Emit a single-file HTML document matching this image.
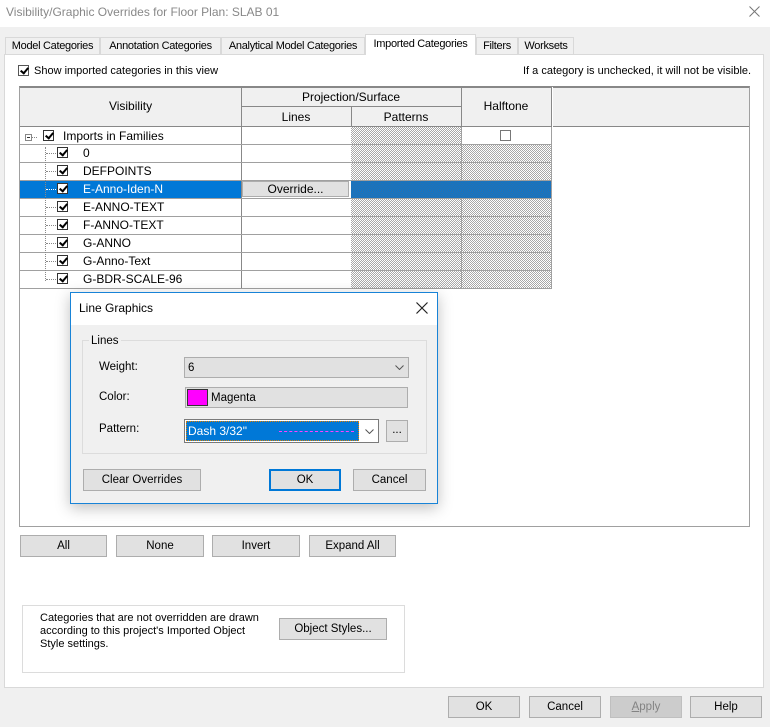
<!DOCTYPE html>
<html><head><meta charset="utf-8"><style>
*{box-sizing:border-box;margin:0;padding:0}
body{width:770px;height:727px;background:#f0f0f0;font-family:"Liberation Sans",sans-serif;font-size:11.5px;color:#000;position:relative;overflow:hidden}
.a{position:absolute}
.t{position:absolute;white-space:nowrap;line-height:14px}
.btn{position:absolute;background:#e1e1e1;border:1px solid #adadad;text-align:center;white-space:nowrap;font-size:11.5px}
.tab{position:absolute;top:37px;height:18px;border:1px solid #d9d9d9;border-bottom:none;background:#f0f0f0;text-align:center;line-height:16px;font-size:11px;white-space:nowrap;letter-spacing:-0.3px;overflow:hidden}
.cb{position:absolute;width:11px;height:11px;border:1px solid #333;background:#fff}
.cb:after{content:"";position:absolute;left:3px;top:0px;width:3px;height:6px;border:solid #000;border-width:0 2px 2px 0;transform:rotate(40deg)}
.hatch{background:repeating-conic-gradient(#a8a8a8 0 25%,#fff 0 50%) 0 0/2px 2px}
.hatchb{background:repeating-conic-gradient(#3a6d9e 0 25%,#0078d7 0 50%) 0 0/2px 2px}
.hl{position:absolute;height:1px;background:#a0a0a0}
.vl{position:absolute;width:1px;background:#a0a0a0}
.dot{position:absolute;border-left:1px dotted #888}
.doth{position:absolute;border-top:1px dotted #888;height:0}
</style></head><body>
<div class="a" style="left:0;top:0;width:770px;height:27px;background:#fff"></div>
<div class="t" style="left:6px;top:5px;color:#888;font-size:12px">Visibility/Graphic Overrides for Floor Plan: SLAB 01</div>
<svg class="a" style="left:749px;top:6px" width="11" height="11"><path d="M0.5 0.5L10.5 10.5M10.5 0.5L0.5 10.5" stroke="#777" stroke-width="1"/></svg>

<div class="tab" style="left:5px;width:95px">Model Categories</div>
<div class="tab" style="left:100px;width:121px">Annotation Categories</div>
<div class="tab" style="left:221px;width:144px">Analytical Model Categories</div>
<div class="tab" style="left:476px;width:42px">Filters</div>
<div class="tab" style="left:518px;width:56px">Worksets</div>
<div class="a" style="left:4px;top:54px;width:760px;height:634px;background:#fff;border:1px solid #d9d9d9"></div>
<div class="tab" style="left:365px;top:34px;width:111px;height:21px;background:#fff;line-height:18px;border-color:#d9d9d9">Imported Categories</div>

<div class="cb" style="left:18px;top:65px;border-color:#555"></div>
<div class="t" style="left:34px;top:64px;font-size:11px">Show imported categories in this view</div>
<div class="t" style="left:523px;top:64px;font-size:11px">If a category is unchecked, it will not be visible.</div>

<!-- grid -->
<div class="a" style="left:19px;top:86px;width:731px;height:441px;border:1px solid #a0a0a0;border-top:2px solid #888;background:#fff"></div>
<div class="a" style="left:20px;top:88px;width:729px;height:38px;background:#f0f0f0"></div>
<div class="hl" style="left:20px;top:126px;width:729px;background:#888"></div>
<div class="vl" style="left:241px;top:87px;height:202px;background:#888"></div>
<div class="vl" style="left:461px;top:87px;height:40px;background:#888"></div>
<div class="vl" style="left:551px;top:87px;height:40px;background:#888"></div>
<div class="vl" style="left:552px;top:87px;height:40px;background:#fff"></div>
<div class="hl" style="left:241px;top:106px;width:220px;background:#888"></div>
<div class="vl" style="left:351px;top:106px;height:20px;background:#888"></div>
<div class="t" style="left:20px;top:99px;width:221px;text-align:center;font-size:12px">Visibility</div>
<div class="t" style="left:241px;top:90px;width:220px;text-align:center;font-size:12px">Projection/Surface</div>
<div class="t" style="left:241px;top:110px;width:110px;text-align:center;font-size:12px">Lines</div>
<div class="t" style="left:351px;top:110px;width:110px;text-align:center;font-size:12px">Patterns</div>
<div class="t" style="left:461px;top:99px;width:90px;text-align:center;font-size:12px">Halftone</div>

<div class="a hatch" style="left:351px;top:127px;width:110px;height:162px"></div>
<div class="a hatch" style="left:461px;top:144px;width:90px;height:145px"></div>
<div class="a" style="left:462px;top:127px;width:89px;height:17px;background:#fff"></div>
<div class="a" style="left:500px;top:130px;width:11px;height:11px;border:1px solid #777;background:#fff"></div>
<div class="vl" style="left:551px;top:127px;height:162px"></div>
<div class="vl" style="left:461px;top:127px;height:162px"></div>
<div class="hl" style="left:20px;top:144px;width:532px"></div>
<div class="hl" style="left:20px;top:162px;width:532px"></div>
<div class="hl" style="left:20px;top:180px;width:532px"></div>
<div class="hl" style="left:20px;top:198px;width:532px"></div>
<div class="hl" style="left:20px;top:216px;width:532px"></div>
<div class="hl" style="left:20px;top:234px;width:532px"></div>
<div class="hl" style="left:20px;top:252px;width:532px"></div>
<div class="hl" style="left:20px;top:270px;width:532px"></div>
<div class="hl" style="left:20px;top:288px;width:532px"></div>

<!-- selected row -->
<div class="a" style="left:20px;top:181px;width:221px;height:17px;background:#0078d7"></div>
<div class="a hatchb" style="left:351px;top:181px;width:200px;height:17px"></div>
<div class="btn" style="left:242px;top:181px;width:107px;height:16px;line-height:14px;font-size:12px">Override...</div>

<!-- tree -->
<div class="a" style="left:25px;top:134px;width:7px;height:7px;border:1px solid #888;background:#fff"></div>
<div class="a" style="left:27px;top:137px;width:3px;height:1px;background:#333"></div>
<div class="doth" style="left:32px;top:137px;width:5px"></div>
<div class="cb" style="left:43px;top:130px"></div>
<div class="t" style="left:63px;top:129px;font-size:12px">Imports in Families</div>
<div class="dot" style="left:45px;top:147px;height:134px"></div>
<div class="doth" style="left:46px;top:153px;width:10px"></div>
<div class="doth" style="left:46px;top:171px;width:10px"></div>
<div class="doth" style="left:46px;top:189px;width:10px;border-top-color:#fff"></div>
<div class="doth" style="left:46px;top:207px;width:10px"></div>
<div class="doth" style="left:46px;top:225px;width:10px"></div>
<div class="doth" style="left:46px;top:243px;width:10px"></div>
<div class="doth" style="left:46px;top:261px;width:10px"></div>
<div class="doth" style="left:46px;top:279px;width:10px"></div>
<div class="cb" style="left:57px;top:147px"></div><div class="t" style="left:83px;top:146px;font-size:12px">0</div>
<div class="cb" style="left:57px;top:165px"></div><div class="t" style="left:83px;top:164px;font-size:12px">DEFPOINTS</div>
<div class="cb" style="left:57px;top:183px"></div><div class="t" style="left:83px;top:182px;font-size:12px;color:#fff">E-Anno-Iden-N</div>
<div class="cb" style="left:57px;top:201px"></div><div class="t" style="left:83px;top:200px;font-size:12px">E-ANNO-TEXT</div>
<div class="cb" style="left:57px;top:219px"></div><div class="t" style="left:83px;top:218px;font-size:12px">F-ANNO-TEXT</div>
<div class="cb" style="left:57px;top:237px"></div><div class="t" style="left:83px;top:236px;font-size:12px">G-ANNO</div>
<div class="cb" style="left:57px;top:255px"></div><div class="t" style="left:83px;top:254px;font-size:12px">G-Anno-Text</div>
<div class="cb" style="left:57px;top:273px"></div><div class="t" style="left:83px;top:272px;font-size:12px">G-BDR-SCALE-96</div>

<!-- Line Graphics dialog -->
<div class="a" style="left:70px;top:292px;width:368px;height:212px;border:1px solid #1883d7;background:#f0f0f0;box-shadow:0 4px 14px rgba(0,0,0,.25)"></div>
<div class="a" style="left:71px;top:293px;width:366px;height:32px;background:#fff"></div>
<div class="t" style="left:79px;top:301px;font-size:12px">Line Graphics</div>
<svg class="a" style="left:416px;top:302px" width="12" height="12"><path d="M0.5 0.5L11.5 11.5M11.5 0.5L0.5 11.5" stroke="#222" stroke-width="1.2"/></svg>
<div class="a" style="left:82px;top:340px;width:345px;height:114px;border:1px solid #dcdcdc"></div>
<div class="t" style="left:89px;top:334px;background:#f0f0f0;padding:0 2px">Lines</div>
<div class="t" style="left:99px;top:360px">Weight:</div>
<div class="a" style="left:184px;top:357px;width:225px;height:21px;background:#e1e1e1;border:1px solid #adadad"></div>
<div class="t" style="left:188px;top:361px">6</div>
<svg class="a" style="left:395px;top:365px" width="9" height="5"><path d="M0.5 0.5L4.5 4.5L8.5 0.5" stroke="#555" fill="none"/></svg>
<div class="t" style="left:99px;top:390px">Color:</div>
<div class="a" style="left:185px;top:387px;width:223px;height:21px;background:#e1e1e1;border:1px solid #adadad"></div>
<div class="a" style="left:187px;top:389px;width:21px;height:17px;background:#ff00ff;border:1px solid #333"></div>
<div class="t" style="left:211px;top:391px">Magenta</div>
<div class="t" style="left:99px;top:422px">Pattern:</div>
<div class="a" style="left:184px;top:419px;width:195px;height:24px;background:#fff;border:1px solid #7a7a7a"></div>
<div class="a" style="left:186px;top:421px;width:173px;height:20px;background:#0078d7;border:1px dotted #e08000"></div>
<div class="t" style="left:188px;top:424px;color:#fff;font-size:12px">Dash 3/32"</div>
<div class="a" style="left:279px;top:431px;width:75px;border-top:1px dashed #ff40ff"></div>
<svg class="a" style="left:365px;top:429px" width="9" height="5"><path d="M0.5 0.5L4.5 4.5L8.5 0.5" stroke="#555" fill="none"/></svg>
<div class="btn" style="left:386px;top:420px;width:22px;height:22px;line-height:18px">...</div>
<div class="btn" style="left:83px;top:469px;width:118px;height:22px;line-height:20px">Clear Overrides</div>
<div class="btn" style="left:269px;top:469px;width:72px;height:22px;line-height:18px;border:2px solid #0078d7">OK</div>
<div class="btn" style="left:353px;top:469px;width:73px;height:22px;line-height:20px">Cancel</div>

<!-- bottom buttons -->
<div class="btn" style="left:20px;top:535px;width:87px;height:22px;line-height:20px">All</div>
<div class="btn" style="left:116px;top:535px;width:88px;height:22px;line-height:20px">None</div>
<div class="btn" style="left:212px;top:535px;width:88px;height:22px;line-height:20px">Invert</div>
<div class="btn" style="left:309px;top:535px;width:87px;height:22px;line-height:20px">Expand All</div>

<div class="a" style="left:22px;top:605px;width:383px;height:68px;border:1px solid #dcdcdc"></div>
<div class="t" style="left:40px;top:612px;line-height:13px;font-size:11px">Categories that are not overridden are drawn<br>according to this project's Imported Object<br>Style settings.</div>
<div class="btn" style="left:279px;top:618px;width:108px;height:22px;line-height:20px">Object Styles...</div>

<div class="btn" style="left:448px;top:696px;width:72px;height:22px;line-height:20px">OK</div>
<div class="btn" style="left:529px;top:696px;width:72px;height:22px;line-height:20px">Cancel</div>
<div class="btn" style="left:610px;top:696px;width:72px;height:22px;line-height:20px;background:#ccc;border-color:#bfbfbf;color:#838383"><u>A</u>pply</div>
<div class="btn" style="left:690px;top:696px;width:72px;height:22px;line-height:20px">Help</div>
</body></html>
